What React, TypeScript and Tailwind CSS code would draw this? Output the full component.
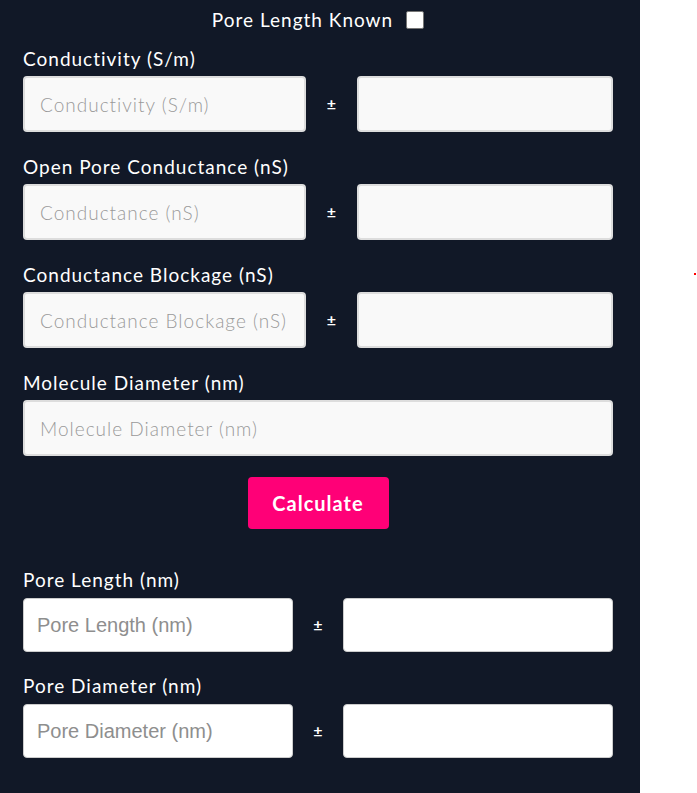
import React from 'react';

const labelCls = "block text-[19px] leading-6 tracking-[1px] text-white mb-[5px]";
const topInput =
  "h-14 w-full rounded-[4px] border-2 border-[#dddddd] bg-[#f9f9f9] px-[15px] text-[19px] font-light tracking-[1px] text-[#333] placeholder:text-[#999999] outline-none";
const bottomInput =
  "h-[54px] w-full rounded-[4px] border border-[#cccccc] bg-white px-[13px] text-[20px] text-[#333] placeholder:text-[#8e8e8e] outline-none";

function PlusMinus() {
  return <div className="flex items-center justify-center text-[16px] font-bold text-white">±</div>;
}

function TopField({ label, placeholder }: { label: string; placeholder: string }) {
  return (
    <div className="mb-[23px]">
      <label className={labelCls}>{label}</label>
      <div className="grid grid-cols-[283px_51px_256px]">
        <input className={topInput} placeholder={placeholder} />
        <PlusMinus />
        <input className={topInput} />
      </div>
    </div>
  );
}

function BottomField({ label, placeholder }: { label: string; placeholder: string }) {
  return (
    <div className="mb-[22px]">
      <label className="block text-[19px] leading-6 tracking-[1px] text-white mb-[6px]">{label}</label>
      <div className="grid grid-cols-[270px_50px_270px]">
        <input
          className={bottomInput}
          style={{ fontFamily: '"Liberation Sans", Arial, sans-serif' }}
          placeholder={placeholder}
        />
        <PlusMinus />
        <input className={bottomInput} />
      </div>
    </div>
  );
}

export default function App() {
  return (
    <div className="relative min-h-screen bg-white" style={{ fontFamily: 'Lato, "Noto Sans", sans-serif' }}>
      <div className="w-[640px] min-h-[793px] bg-[#111827] pl-[23px] pr-[27px]">
        <div className="flex items-center justify-center gap-[13px] pt-[8px] pb-[15px] leading-6">
          <span className="text-[19px] tracking-[1px] text-white">Pore Length Known</span>
          <input type="checkbox" className="h-[18px] w-[18px] appearance-none rounded-[2px] border border-[#767676] bg-white" />
        </div>

        <TopField label="Conductivity (S/m)" placeholder="Conductivity (S/m)" />
        <TopField label="Open Pore Conductance (nS)" placeholder="Conductance (nS)" />
        <TopField label="Conductance Blockage (nS)" placeholder="Conductance Blockage (nS)" />

        <div className="mb-[21px]">
          <label className={labelCls}>Molecule Diameter (nm)</label>
          <input className={topInput} placeholder="Molecule Diameter (nm)" />
        </div>

        <div className="mb-[39px] flex justify-center">
          <button className="h-[52px] w-[141px] rounded-[4px] bg-[#ff0077] text-[20px] font-bold tracking-[1px] text-white">
            Calculate
          </button>
        </div>

        <BottomField label="Pore Length (nm)" placeholder="Pore Length (nm)" />
        <BottomField label="Pore Diameter (nm)" placeholder="Pore Diameter (nm)" />
      </div>
      <span className="absolute left-[694px] top-[273px] h-[2px] w-[2px] bg-[#ff0000]" />
    </div>
  );
}
